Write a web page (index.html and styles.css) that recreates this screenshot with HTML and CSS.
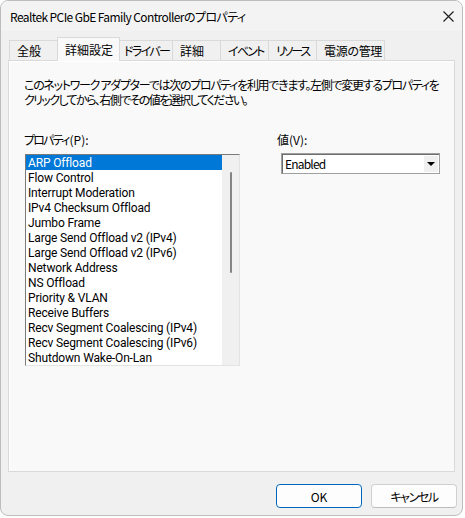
FILE: index.html
```html
<!DOCTYPE html>
<html lang="ja">
<head>
<meta charset="utf-8">
<title>Realtek PCIe GbE Family Controllerのプロパティ</title>
<link rel="stylesheet" href="styles.css">
</head>
<body>
<div class="window">
  <div class="titlebar">
    <span class="title">Realtek PCIe GbE Family Controllerのプロパティ</span>
    <svg class="close" width="11" height="11" viewBox="0 0 11 11"><path d="M0.5 0.5 L10.5 10.5 M10.5 0.5 L0.5 10.5" stroke="#1a1a1a" stroke-width="1.1" fill="none"/></svg>
  </div>
  <div class="tabs">
    <div class="tab t1">全般</div>
    <div class="tab t2 active">詳細設定</div>
    <div class="tab t3">ドライバー</div>
    <div class="tab t4">詳細</div>
    <div class="tab t5">イベント</div>
    <div class="tab t6">リソース</div>
    <div class="tab t7">電源の管理</div>
  </div>
  <div class="panel">
    <div class="desc">
      <div class="desc-line l1">このネットワーク アダプターでは次のプロパティを利用できます。左側で変更するプロパティを</div>
      <div class="desc-line l2">クリックしてから、右側でその値を選択してください。</div>
    </div>
    <div class="fields">
      <div class="col-left">
        <div class="label"><span class="kana">プロパティ</span>(P):</div>
        <div class="listbox">
          <ul class="items">
            <li class="item selected">ARP Offload</li>
            <li class="item">Flow Control</li>
            <li class="item">Interrupt Moderation</li>
            <li class="item">IPv4 Checksum Offload</li>
            <li class="item">Jumbo Frame</li>
            <li class="item">Large Send Offload v2 (IPv4)</li>
            <li class="item">Large Send Offload v2 (IPv6)</li>
            <li class="item">Network Address</li>
            <li class="item">NS Offload</li>
            <li class="item">Priority &amp; VLAN</li>
            <li class="item">Receive Buffers</li>
            <li class="item">Recv Segment Coalescing (IPv4)</li>
            <li class="item">Recv Segment Coalescing (IPv6)</li>
            <li class="item">Shutdown Wake-On-Lan</li>
          </ul>
          <div class="scrollbar"><div class="thumb"></div></div>
        </div>
      </div>
      <div class="col-right">
        <div class="label">値(V):</div>
        <div class="combo">
          <span class="combo-text">Enabled</span>
          <span class="combo-btn"><span class="arrow"></span></span>
        </div>
      </div>
    </div>
  </div>
  <div class="buttons">
    <button class="btn primary">OK</button>
    <button class="btn kana-btn">キャンセル</button>
  </div>
</div>
</body>
</html>
```
FILE: styles.css
```css
html, body {
  margin: 0;
  padding: 0;
  background: #ffffff;
}
body {
  font-family: "Noto Sans CJK JP", "Noto Sans", sans-serif;
  font-size: 12px;
  color: #000;
  font-feature-settings: "palt";
}
.window {
  width: 463px;
  height: 516px;
  box-sizing: border-box;
  border: 1px solid #bdbdbd;
  border-radius: 8px;
  background: #f0f0f0;
  display: flex;
  flex-direction: column;
  overflow: hidden;
}
.titlebar {
  height: 30px;
  flex: none;
  display: flex;
  align-items: center;
  justify-content: space-between;
  padding: 0 8px 0 9px;
  background: #f3f3f3;
}
.title {
  font-size: 12px;
  line-height: 15px;
  letter-spacing: -0.6px;
  color: #000;
}
.close {
  display: block;
}
.tabs {
  display: flex;
  align-items: flex-end;
  height: 22px;
  margin: 7px 0 0 8px;
  flex: none;
}
.tab {
  height: 20px;
  box-sizing: border-box;
  border: 1px solid #d9d9d9;
  border-bottom: none;
  margin-left: -1px;
  padding-left: 7px;
  line-height: 19px;
  background: #f0f0f0;
  white-space: nowrap;
}
.tab.t1 { margin-left: 0; width: 49px; }
.tab.t2 { width: 63px; }
.tab.t3 { width: 54px; padding-left: 4px; letter-spacing: -1.6px; }
.tab.t4 { width: 49px; }
.tab.t5 { width: 49px; letter-spacing: -1.8px; }
.tab.t6 { width: 49px; letter-spacing: -2.2px; }
.tab.t7 { width: 69px; letter-spacing: -0.3px; }
.tab.active {
  height: 24px;
  margin-bottom: -1px;
  background: #f9f9f9;
  position: relative;
  z-index: 1;
  line-height: 23px;
  border-color: #d9d9d9;
}
.panel {
  width: 447px;
  height: 412px;
  box-sizing: border-box;
  margin-left: 7px;
  border: 1px solid #d9d9d9;
  background: #f9f9f9;
  box-shadow: inset 1px 1px 0 #ffffff;
  padding: 16px 10px 0 15px;
  flex: none;
}
.desc {
  white-space: nowrap;
}
.desc-line {
  height: 15px;
  line-height: 15px;
}
.desc-line.l1 {
  letter-spacing: -1.3px;
}
.desc-line.l2 {
  letter-spacing: -1.6px;
}
.fields {
  display: grid;
  grid-template-columns: 253px 1fr;
  margin-top: 25px;
}
.label {
  line-height: 15px;
  white-space: nowrap;
}
.label .kana {
  letter-spacing: -1.8px;
  margin-right: 1px;
}
.listbox {
  margin: 7px 0 0 1px;
  width: 215px;
  height: 212px;
  box-sizing: border-box;
  border-top: 1px solid #7a7a7a;
  border-left: 1px solid #7a7a7a;
  border-right: 1px solid #e3e3e3;
  border-bottom: 1px solid #e3e3e3;
  background: #ffffff;
  display: flex;
}
.items {
  list-style: none;
  margin: 0;
  padding: 0;
  flex: 1;
  font-family: Roboto, "Noto Sans", sans-serif;
}
.item {
  height: 15px;
  box-sizing: border-box;
  padding: 1px 0 0 2px;
  line-height: 14px;
  letter-spacing: -0.15px;
  white-space: nowrap;
}
.item.selected {
  background: #0078d7;
  color: #ffffff;
}
.scrollbar {
  width: 17px;
  flex: none;
  background: #f0f0f0;
  padding: 17px 0 0 8px;
  box-sizing: border-box;
}
.thumb {
  width: 2px;
  height: 101px;
  background: #858585;
  border-radius: 1px;
}
.combo {
  margin: 6px 0 0 4px;
  width: 159px;
  height: 21px;
  box-sizing: border-box;
  border: 1px solid #a0a0a0;
  box-shadow: inset 1px 1px 0 #6e6e6e;
  background: #ffffff;
  display: flex;
  align-items: stretch;
  padding: 2px 1px 1px 2px;
}
.combo-text {
  flex: 1;
  line-height: 16px;
  padding-left: 1px;
  letter-spacing: -0.8px;
}
.combo-btn {
  width: 14px;
  background: #f0f0f0;
  display: flex;
  align-items: center;
  justify-content: center;
}
.arrow {
  width: 0;
  height: 0;
  border-left: 4px solid transparent;
  border-right: 4px solid transparent;
  border-top: 4px solid #000;
}
.buttons {
  display: flex;
  justify-content: flex-end;
  gap: 9px;
  margin: 12px 5px 0 0;
  flex: none;
}
.btn {
  width: 86px;
  height: 24px;
  box-sizing: border-box;
  font-family: "Noto Sans CJK JP", "Noto Sans", sans-serif;
  font-feature-settings: "palt";
  font-size: 12px;
  color: #000;
  background: #fdfdfd;
  border: 1px solid #d0d0d0;
  border-bottom-color: #bdbdbd;
  border-radius: 4px;
  padding: 0;
}
.btn.kana-btn {
  letter-spacing: -1.4px;
}
.btn.primary {
  border: 1px solid #0067c0;
  box-shadow: inset 0 0 0 1px #ffffff;
}
```
